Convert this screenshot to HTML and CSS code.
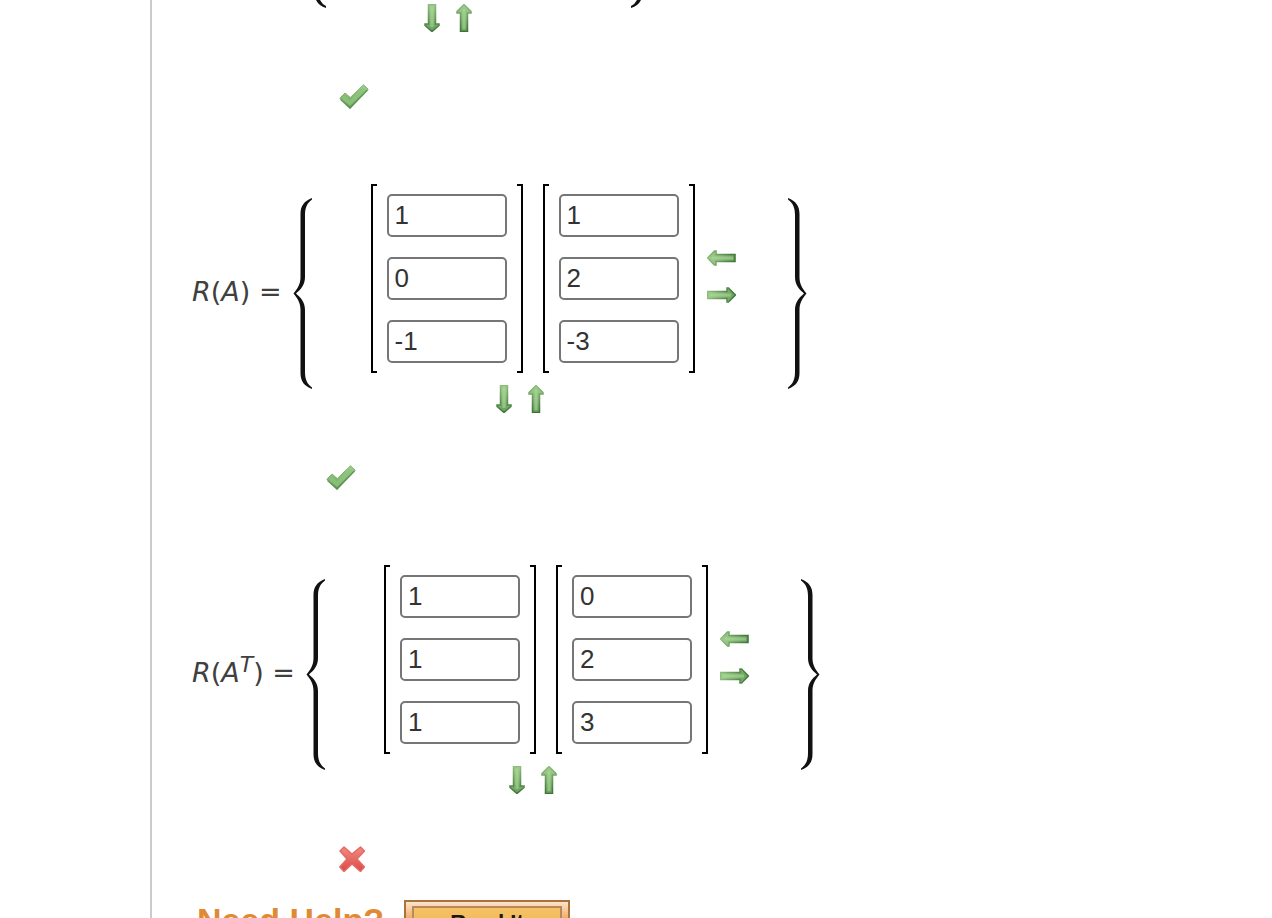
FILE: index.html
```
<!DOCTYPE html>
<html lang="en">
    <head>
        <meta charset="utf-8">
        <title>Fundamental Subspaces</title>
        <link rel="stylesheet" href="styles.css">
    </head>

    <body>
        <svg class="defs" aria-hidden="true">
            <defs>
                <linearGradient id="green" x1="0" y1="0" x2="0" y2="1">
                    <stop offset="0" stop-color="#a3cf8f"/>
                    <stop offset="1" stop-color="#679f5c"/>
                </linearGradient>
                <linearGradient id="greenEdge" x1="0" y1="0" x2="0" y2="1">
                    <stop offset="0" stop-color="#8dbd7c"/>
                    <stop offset="1" stop-color="#3c7336"/>
                </linearGradient>
                <linearGradient id="greenSide" x1="0" y1="0" x2="1" y2="0">
                    <stop offset="0" stop-color="#a3cf8f"/>
                    <stop offset="1" stop-color="#679f5c"/>
                </linearGradient>
                <linearGradient id="greenSideEdge" x1="0" y1="0" x2="1" y2="0">
                    <stop offset="0" stop-color="#8dbd7c"/>
                    <stop offset="1" stop-color="#3c7336"/>
                </linearGradient>
                <linearGradient id="red" x1="0" y1="0" x2="0" y2="1">
                    <stop offset="0" stop-color="#f08a84"/>
                    <stop offset="1" stop-color="#dc4a44"/>
                </linearGradient>
            </defs>
            <symbol id="down" viewBox="0 0 16 28">
                <path d="M4.500 .5h7v19.500h3.500v1.500L8 27.500 1 21.500V20h3.500z" fill="url(#green)" stroke="url(#greenEdge)" stroke-width="1.500"/>
                <path d="M8 3v20" stroke="#b4dba2" stroke-width="3" opacity=".5"/>
            </symbol>
            <symbol id="up" viewBox="0 0 16 28">
                <path d="M4.500 27.500h7V9h3.500V7.500L8 .5 1 7.500V9h3.500z" fill="url(#green)" stroke="url(#greenEdge)" stroke-width="1.500"/>
                <path d="M8 5v20" stroke="#b4dba2" stroke-width="3" opacity=".5"/>
            </symbol>
            <symbol id="left" viewBox="0 0 29 16">
                <path d="M28 4.500v7H9V15H7.500L.5 8l7-7H9v3.500z" fill="url(#greenSide)" stroke="url(#greenSideEdge)" stroke-width="1.500"/>
                <path d="M5 8h21" stroke="#b4dba2" stroke-width="3" opacity=".5"/>
            </symbol>
            <symbol id="right" viewBox="0 0 29 16">
                <path d="M.5 4.500v7H20V15h1.500l7-7-7-7H20v3.500z" fill="url(#greenSide)" stroke="url(#greenSideEdge)" stroke-width="1.500"/>
                <path d="M3 8h21" stroke="#b4dba2" stroke-width="3" opacity=".5"/>
            </symbol>
            <symbol id="check" viewBox="0 0 30 26">
                <path d="M.8 14.200L6 9l5.300 4.500L24.500.8l4.700 4.400L11 24.500z" fill="url(#green)" stroke="#7fb371" stroke-linejoin="round"/>
                <path d="M1.500 15.500l9.500 8.500L28.500 6" fill="none" stroke="#4b8546" stroke-width="1.500" opacity=".7"/>
                <path d="M4 13l7 6L25 5" fill="none" stroke="#8cc47c" stroke-width="4" opacity=".8"/>
            </symbol>
            <symbol id="cross" viewBox="0 0 26 26">
                <path d="M1 5l4-4 8 7L21.500 1 25.500 5 18 13l7.500 8-4 4.500L13 18 5 25.500 .8 21 8 13z" fill="url(#red)" stroke="#e46a65" stroke-width="1.500" stroke-linejoin="round"/>
            </symbol>
            <symbol id="brace" viewBox="0 0 19 191">
                <path d="M19 0C11 3 7.500 8 7.500 16V79C7.500 86 5 90 .5 95.500 5 101 7.500 105 7.500 112V175C7.500 183 11 188 19 191V189.500C14 186 12 181 12 174V112C12 104 8 100 3 95.500 8 91 12 87 12 79V17C12 10 14 5 19 1.500z" fill="#111"/>
            </symbol>
        </svg>

        <main class="question">
            <div class="answer cut">
                <div class="tails">
                    <svg width="10" height="8"><path d="M0 0h4q2 4 6 6v2Q3 6 0 0z" fill="#111"/></svg>
                    <svg width="10" height="8"><path d="M10 0H6Q4 4 0 6v2q7-2 10-8z" fill="#111"/></svg>
                </div>
                <div class="rows">
                    <button type="button" aria-label="Add row"><svg width="16" height="28"><use href="#down"/></svg></button>
                    <button type="button" aria-label="Remove row"><svg width="16" height="28"><use href="#up"/></svg></button>
                </div>
                <div class="mark"><svg width="30" height="26" role="img" aria-label="Correct"><use href="#check"/></svg></div>
            </div>

            <div class="answer">
                <div class="label"><i>R</i>(<i>A</i>) =</div>
                <div class="set">
                    <svg class="brace" width="19" height="191"><use href="#brace"/></svg>
                    <div class="vectors">
                        <div class="matrices">
                            <div class="matrix">
                                <div class="cells">
                                    <input type="text" aria-label="Vector 1, row 1" value="1">
                                    <input type="text" aria-label="Vector 1, row 2" value="0">
                                    <input type="text" aria-label="Vector 1, row 3" value="-1">
                                </div>
                            </div>
                            <div class="matrix">
                                <div class="cells">
                                    <input type="text" aria-label="Vector 2, row 1" value="1">
                                    <input type="text" aria-label="Vector 2, row 2" value="2">
                                    <input type="text" aria-label="Vector 2, row 3" value="-3">
                                </div>
                            </div>
                            <div class="columns">
                                <button type="button" aria-label="Remove vector"><svg width="29" height="16"><use href="#left"/></svg></button>
                                <button type="button" aria-label="Add vector"><svg width="29" height="16"><use href="#right"/></svg></button>
                            </div>
                        </div>
                        <div class="rows">
                            <button type="button" aria-label="Add row"><svg width="16" height="28"><use href="#down"/></svg></button>
                            <button type="button" aria-label="Remove row"><svg width="16" height="28"><use href="#up"/></svg></button>
                        </div>
                    </div>
                    <svg class="brace close" width="19" height="191"><use href="#brace"/></svg>
                </div>
                <div class="mark"><svg width="30" height="26" role="img" aria-label="Correct"><use href="#check"/></svg></div>
            </div>

            <div class="answer">
                <div class="label"><i>R</i>(<i>A<sup>T</sup></i>) =</div>
                <div class="set">
                    <svg class="brace" width="19" height="191"><use href="#brace"/></svg>
                    <div class="vectors">
                        <div class="matrices">
                            <div class="matrix">
                                <div class="cells">
                                    <input type="text" aria-label="Vector 1, row 1" value="1">
                                    <input type="text" aria-label="Vector 1, row 2" value="1">
                                    <input type="text" aria-label="Vector 1, row 3" value="1">
                                </div>
                            </div>
                            <div class="matrix">
                                <div class="cells">
                                    <input type="text" aria-label="Vector 2, row 1" value="0">
                                    <input type="text" aria-label="Vector 2, row 2" value="2">
                                    <input type="text" aria-label="Vector 2, row 3" value="3">
                                </div>
                            </div>
                            <div class="columns">
                                <button type="button" aria-label="Remove vector"><svg width="29" height="16"><use href="#left"/></svg></button>
                                <button type="button" aria-label="Add vector"><svg width="29" height="16"><use href="#right"/></svg></button>
                            </div>
                        </div>
                        <div class="rows">
                            <button type="button" aria-label="Add row"><svg width="16" height="28"><use href="#down"/></svg></button>
                            <button type="button" aria-label="Remove row"><svg width="16" height="28"><use href="#up"/></svg></button>
                        </div>
                    </div>
                    <svg class="brace close" width="19" height="191"><use href="#brace"/></svg>
                </div>
                <div class="mark"><svg width="26" height="26" role="img" aria-label="Incorrect"><use href="#cross"/></svg></div>
            </div>

            <div class="help">
                <span class="help-title">Need Help?</span>
                <button type="button" class="read"><span>Read It</span></button>
            </div>
        </main>
    </body>
</html>
```
FILE: styles.css
```
html {
    height: 100%;
    overflow: hidden;
}

body {
    background-color: white;
    color: #404040;
    font-family: Verdana, "DejaVu Sans", sans-serif;
    font-size: 27px;
    height: 100%;
    margin: 0;
}

button {
    background: none;
    border: none;
    cursor: pointer;
    padding: 0;
}

svg {
    display: block;
}

input {
    background-color: white;
    border: 2px solid #767676;
    border-radius: 5px;
    box-sizing: border-box;
    color: #333;
    display: block;
    font-family: "Liberation Sans", Arial, sans-serif;
    font-size: 26px;
    height: 43px;
    padding: 0 6px;
    width: 120px;
}

sup {
    font-size: 22px;
    line-height: 0;
}

.defs {
    height: 0;
    position: absolute;
    width: 0;
}

.question {
    border-left: 2px solid #ccc;
    margin-left: 150px;
    min-height: 100%;
    padding-left: 40px;
}

.answer {
    display: grid;
    grid-template-columns: max-content 1fr;
    column-gap: 11px;
    margin-bottom: 64px;
}

.answer:nth-last-child(2) {
    margin-bottom: 28px;
}

.label {
    align-self: center;
    padding-bottom: 4px;
    white-space: nowrap;
}

.set {
    align-items: center;
    display: flex;
}

.vectors {
    margin: 0 52px 0 59px;
    padding-top: 10px;
}

.matrices {
    display: flex;
}

.matrix {
    display: flex;
    margin-right: 20px;
}

.matrix:nth-child(2) {
    margin-right: 12px;
}

.matrix::before,
.matrix::after {
    border: 2px solid black;
    box-sizing: border-box;
    content: "";
    width: 6px;
}

.matrix::before {
    border-right: none;
}

.matrix::after {
    border-left: none;
}

.cells {
    display: grid;
    gap: 20px;
    padding: 10px;
}

.columns {
    align-self: center;
    display: grid;
    gap: 21px;
    padding-bottom: 4px;
}

.rows {
    display: flex;
    gap: 16px;
    margin-top: 12px;
    padding-left: 125px;
}

.close {
    transform: scaleX(-1);
}

.mark {
    grid-column: 2;
    margin-top: 52px;
    padding-left: 33px;
}

/* first answer, scrolled up so only its end shows */
.cut {
    display: block;
    padding-left: 114px;
}

.cut .tails {
    display: flex;
    height: 4px;
    justify-content: space-between;
    margin-left: 10px;
    width: 325px;
}

.cut .rows {
    margin-top: 0;
    padding-left: 118px;
}

.help {
    align-items: flex-start;
    display: flex;
    font-family: "Liberation Sans", Arial, sans-serif;
    font-weight: bold;
    gap: 20px;
    padding-left: 5px;
}

.help-title {
    color: #e08a35;
    font-size: 34px;
    line-height: 40px;
}

.read {
    background: linear-gradient(#fde3cd, #f0a04c 20px);
    border: 2px solid #a8743c;
    color: #1c1508;
    font-family: "Liberation Sans", Arial, sans-serif;
    font-size: 22px;
    font-weight: bold;
    padding: 4px 6px;
    width: 166px;
}

.read span {
    background: linear-gradient(#f5c266, #f0b04a);
    border: 2px solid #b58a5c;
    display: block;
    line-height: 30px;
}
```
